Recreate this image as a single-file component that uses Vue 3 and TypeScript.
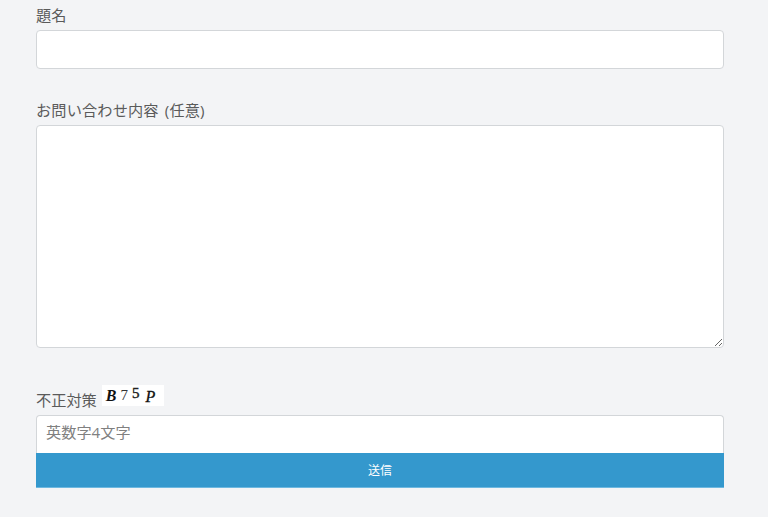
<script setup lang="ts">
const title = '題名'
</script>

<template>
  <form class="page" @submit.prevent>
    <label class="field first">
      <span class="label">{{ title }}</span>
      <input class="control single" type="text" />
    </label>
    <label class="field second">
      <span class="label spaced">お問い合わせ内容 (任意)</span>
      <textarea class="control area"></textarea>
    </label>
    <div class="field third">
      <div class="captcha-row">
        <span class="label">不正対策</span>
        <span class="captcha">
          <b class="c1">B</b><i class="c2">7</i><i class="c3">5</i><i class="c4">P</i>
        </span>
      </div>
      <input class="control single code" type="text" placeholder="英数字4文字" />
    </div>
    <button class="send" type="submit">送信</button>
  </form>
</template>

<style>
html, body { margin: 0; background: #f3f4f6; }
</style>

<style scoped>
.page {
  width: 688px;
  margin-left: 36px;
  padding-top: 6px;
  display: flex;
  flex-direction: column;
  font-family: "Open Sans", "Noto Sans CJK JP", sans-serif;
  color: #555;
}
.field { display: flex; flex-direction: column; }
.label {
  font-size: 15.2px;
  line-height: 19px;
  color: #5a5a5a;
  font-family: "Open Sans", "Noto Sans CJK JP", sans-serif;
}
.spaced { word-spacing: 2px; letter-spacing: 0.15px; }
.first .label { margin-bottom: 5px; }
.second { margin-top: 32px; }
.second .label { margin-bottom: 5px; }
.third { margin-top: 36px; }
.control {
  display: block;
  width: 100%;
  box-sizing: border-box;
  background: #fff;
  border: 1px solid #d3d6d9;
  border-radius: 4px;
  outline: none;
  margin: 0;
}
.single { height: 39px; }
.area { height: 223px; resize: vertical; }
.captcha-row {
  display: flex;
  align-items: flex-end;
  gap: 4px;
  height: 22px;
  margin-bottom: 9px;
}
.captcha-row .label { line-height: 20px; margin-bottom: -4px; }
.captcha {
  width: 62px;
  height: 21px;
  background: #fff;
  box-sizing: border-box;
  padding-left: 4px;
  display: flex;
  align-items: center;
  font-family: "Liberation Serif", serif;
  font-size: 15px;
  color: #222;
  margin-left: 1px;
}
.captcha b { color: #111; }
.c1 { margin-right: 4px; font-style: italic; font-size: 16px; }
.c2 { margin-right: 4px; font-style: normal; font-size: 15px; color: #333; }
.c3 { margin-right: 6px; font-style: normal; font-size: 15px; color: #222; -webkit-text-stroke: 0.4px #222; transform: translateY(-2px); }
.c4 { font-size: 16px; font-weight: 400; color: #111; -webkit-text-stroke: 0.3px #111; transform: translateY(1px); }
.code {
  height: 38px;
  padding: 0 9px 5px;
  font-size: 15.2px;
  font-family: "Open Sans", "Noto Sans CJK JP", sans-serif;
  border-radius: 4px 4px 0 0;
  border-bottom: 0;
}
.code::placeholder { color: #808080; opacity: 1; }
.send {
  display: block;
  width: 100%;
  height: 35px;
  margin: 0;
  padding: 0 0 2px;
  border: 0;
  border-bottom: 1px solid #6db8e0;
  background: #3498cd;
  color: #fff;
  font-size: 12px;
  font-family: "Noto Sans CJK JP", sans-serif;
}
</style>
